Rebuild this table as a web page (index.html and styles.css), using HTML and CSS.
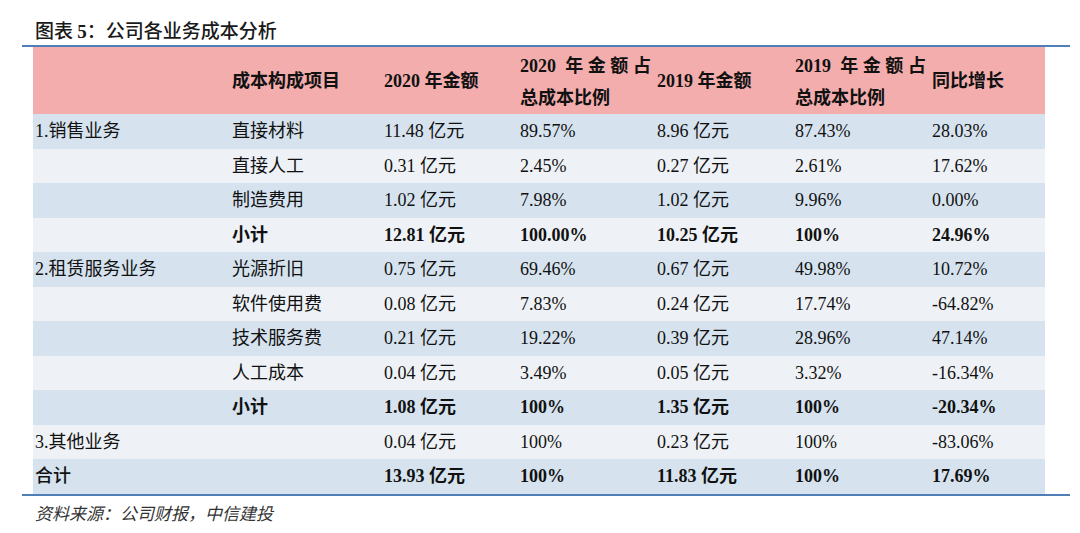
FILE: index.html
```html
<!DOCTYPE html>
<html lang="zh">
<head>
<meta charset="utf-8">
<link rel="stylesheet" href="styles.css">
</head>
<body>
<div class="page">
  <div class="title">图表 <b class="num">5</b><span class="punct">：</span>公司各业务成本分析</div>
  <div class="sheet">
    <div class="row head">
      <div class="c"></div>
      <div class="c">成本构成项目</div>
      <div class="c">2020 年金额</div>
      <div class="c two"><span class="j">2020 年金额占</span><span>总成本比例</span></div>
      <div class="c">2019 年金额</div>
      <div class="c two"><span class="j">2019 年金额占</span><span>总成本比例</span></div>
      <div class="c">同比增长</div>
    </div>
    <div class="row a">
      <div class="c">1.销售业务</div><div class="c">直接材料</div><div class="c">11.48 亿元</div><div class="c">89.57%</div><div class="c">8.96 亿元</div><div class="c">87.43%</div><div class="c">28.03%</div>
    </div>
    <div class="row b">
      <div class="c"></div><div class="c">直接人工</div><div class="c">0.31 亿元</div><div class="c">2.45%</div><div class="c">0.27 亿元</div><div class="c">2.61%</div><div class="c">17.62%</div>
    </div>
    <div class="row a">
      <div class="c"></div><div class="c">制造费用</div><div class="c">1.02 亿元</div><div class="c">7.98%</div><div class="c">1.02 亿元</div><div class="c">9.96%</div><div class="c">0.00%</div>
    </div>
    <div class="row b bold">
      <div class="c"></div><div class="c">小计</div><div class="c">12.81 亿元</div><div class="c">100.00%</div><div class="c">10.25 亿元</div><div class="c">100%</div><div class="c">24.96%</div>
    </div>
    <div class="row a">
      <div class="c">2.租赁服务业务</div><div class="c">光源折旧</div><div class="c">0.75 亿元</div><div class="c">69.46%</div><div class="c">0.67 亿元</div><div class="c">49.98%</div><div class="c">10.72%</div>
    </div>
    <div class="row b">
      <div class="c"></div><div class="c">软件使用费</div><div class="c">0.08 亿元</div><div class="c">7.83%</div><div class="c">0.24 亿元</div><div class="c">17.74%</div><div class="c">-64.82%</div>
    </div>
    <div class="row a">
      <div class="c"></div><div class="c">技术服务费</div><div class="c">0.21 亿元</div><div class="c">19.22%</div><div class="c">0.39 亿元</div><div class="c">28.96%</div><div class="c">47.14%</div>
    </div>
    <div class="row b">
      <div class="c"></div><div class="c">人工成本</div><div class="c">0.04 亿元</div><div class="c">3.49%</div><div class="c">0.05 亿元</div><div class="c">3.32%</div><div class="c">-16.34%</div>
    </div>
    <div class="row a bold">
      <div class="c"></div><div class="c">小计</div><div class="c">1.08 亿元</div><div class="c">100%</div><div class="c">1.35 亿元</div><div class="c">100%</div><div class="c">-20.34%</div>
    </div>
    <div class="row b">
      <div class="c">3.其他业务</div><div class="c"></div><div class="c">0.04 亿元</div><div class="c">100%</div><div class="c">0.23 亿元</div><div class="c">100%</div><div class="c">-83.06%</div>
    </div>
    <div class="row a bold">
      <div class="c">合计</div><div class="c"></div><div class="c">13.93 亿元</div><div class="c">100%</div><div class="c">11.83 亿元</div><div class="c">100%</div><div class="c">17.69%</div>
    </div>
  </div>
  <div class="source">资料来源<span class="punct">：</span>公司财报<span class="punct">，</span>中信建投</div>
</div>
</body>
</html>
```

FILE: styles.css
```css
html, body {
  margin: 0;
  padding: 0;
  background: #ffffff;
}

body {
  font-family: "Liberation Serif", "Noto Sans CJK SC", serif;
  color: #111111;
  text-spacing-trim: space-all;
}

.page {
  width: 1048px;
  margin-left: 22px;
}

.punct {
  display: inline-block;
  width: 1em;
  text-align: left;
}

.title {
  box-sizing: border-box;
  height: 45px;
  padding: 17px 0 0 13px;
  font-family: "Noto Sans CJK SC", sans-serif;
  font-size: 19px;
  line-height: 26px;
  font-weight: 500;
  color: #1a1a1a;
}

.title .num {
  font-family: "Liberation Serif", serif;
  font-weight: 700;
}

.sheet {
  border-top: 2px solid #4f7fb6;
  border-bottom: 2px solid #4f7fb6;
  padding: 0 25px 0 11px;
}

.row {
  display: grid;
  grid-template-columns: 197px 152px 136px 137px 138px 137px 115px;
  height: 34.5px;
  align-items: center;
  font-size: 18px;
  line-height: 22px;
}

.row .c {
  padding-left: 2px;
  white-space: nowrap;
}

.head {
  height: 67px;
  background: #f4adad;
  font-weight: 700;
}

.head .two {
  display: flex;
  flex-direction: column;
  line-height: 32px;
  padding-top: 3px;
}

.head .j {
  display: block;
  width: 131px;
  text-align: justify;
  text-align-last: justify;
}

.a {
  background: #d6e3ef;
}

.b {
  background: #eef2f6;
}

.bold .c {
  font-weight: 700;
}

.bold .c:first-child {
  font-weight: 500;
}

.source {
  padding: 8px 0 0 13px;
  font-size: 17px;
  line-height: 22px;
  font-style: italic;
  color: #333333;
}
```
